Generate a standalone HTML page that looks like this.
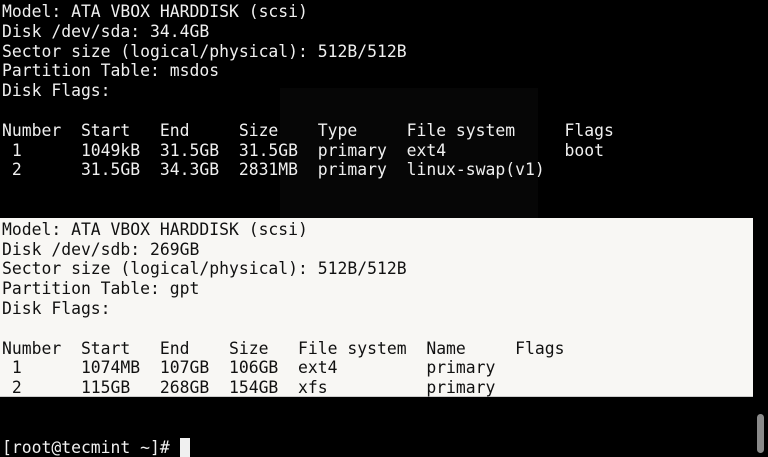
<!DOCTYPE html>
<html><head><style>
html,body{margin:0;padding:0;background:#000;width:768px;height:457px;overflow:hidden}
pre{margin:0;font-family:"DejaVu Sans Mono","Liberation Mono",monospace;font-size:16.4px;line-height:19.8px;color:#f0f0f0;position:absolute;left:2px;top:2px;white-space:pre}
.hl{position:absolute;left:0;top:218px;width:753px;height:178px;background:#f8f7f4;border-bottom:1px solid #ccc}
.win{position:absolute;left:280px;top:88px;width:258px;height:247px;background:#060606}
.sb{position:absolute;left:757px;top:414px;width:7px;height:39px;border-radius:4px;background:#8a8a8a}
.dark{color:#111}
.cur{background:#f0f0f0}
</style></head><body>
<div class="win"></div>
<div class="hl"></div>
<div class="sb"></div>
<pre>Model: ATA VBOX HARDDISK (scsi)
Disk /dev/sda: 34.4GB
Sector size (logical/physical): 512B/512B
Partition Table: msdos
Disk Flags:

Number  Start   End     Size    Type     File system     Flags
 1      1049kB  31.5GB  31.5GB  primary  ext4            boot
 2      31.5GB  34.3GB  2831MB  primary  linux-swap(v1)

<span class="dark">
Model: ATA VBOX HARDDISK (scsi)
Disk /dev/sdb: 269GB
Sector size (logical/physical): 512B/512B
Partition Table: gpt
Disk Flags:

Number  Start   End    Size   File system  Name     Flags
 1      1074MB  107GB  106GB  ext4         primary
 2      115GB   268GB  154GB  xfs          primary</span>


[root@tecmint ~]# <span class="cur"> </span></pre>
</body></html>
